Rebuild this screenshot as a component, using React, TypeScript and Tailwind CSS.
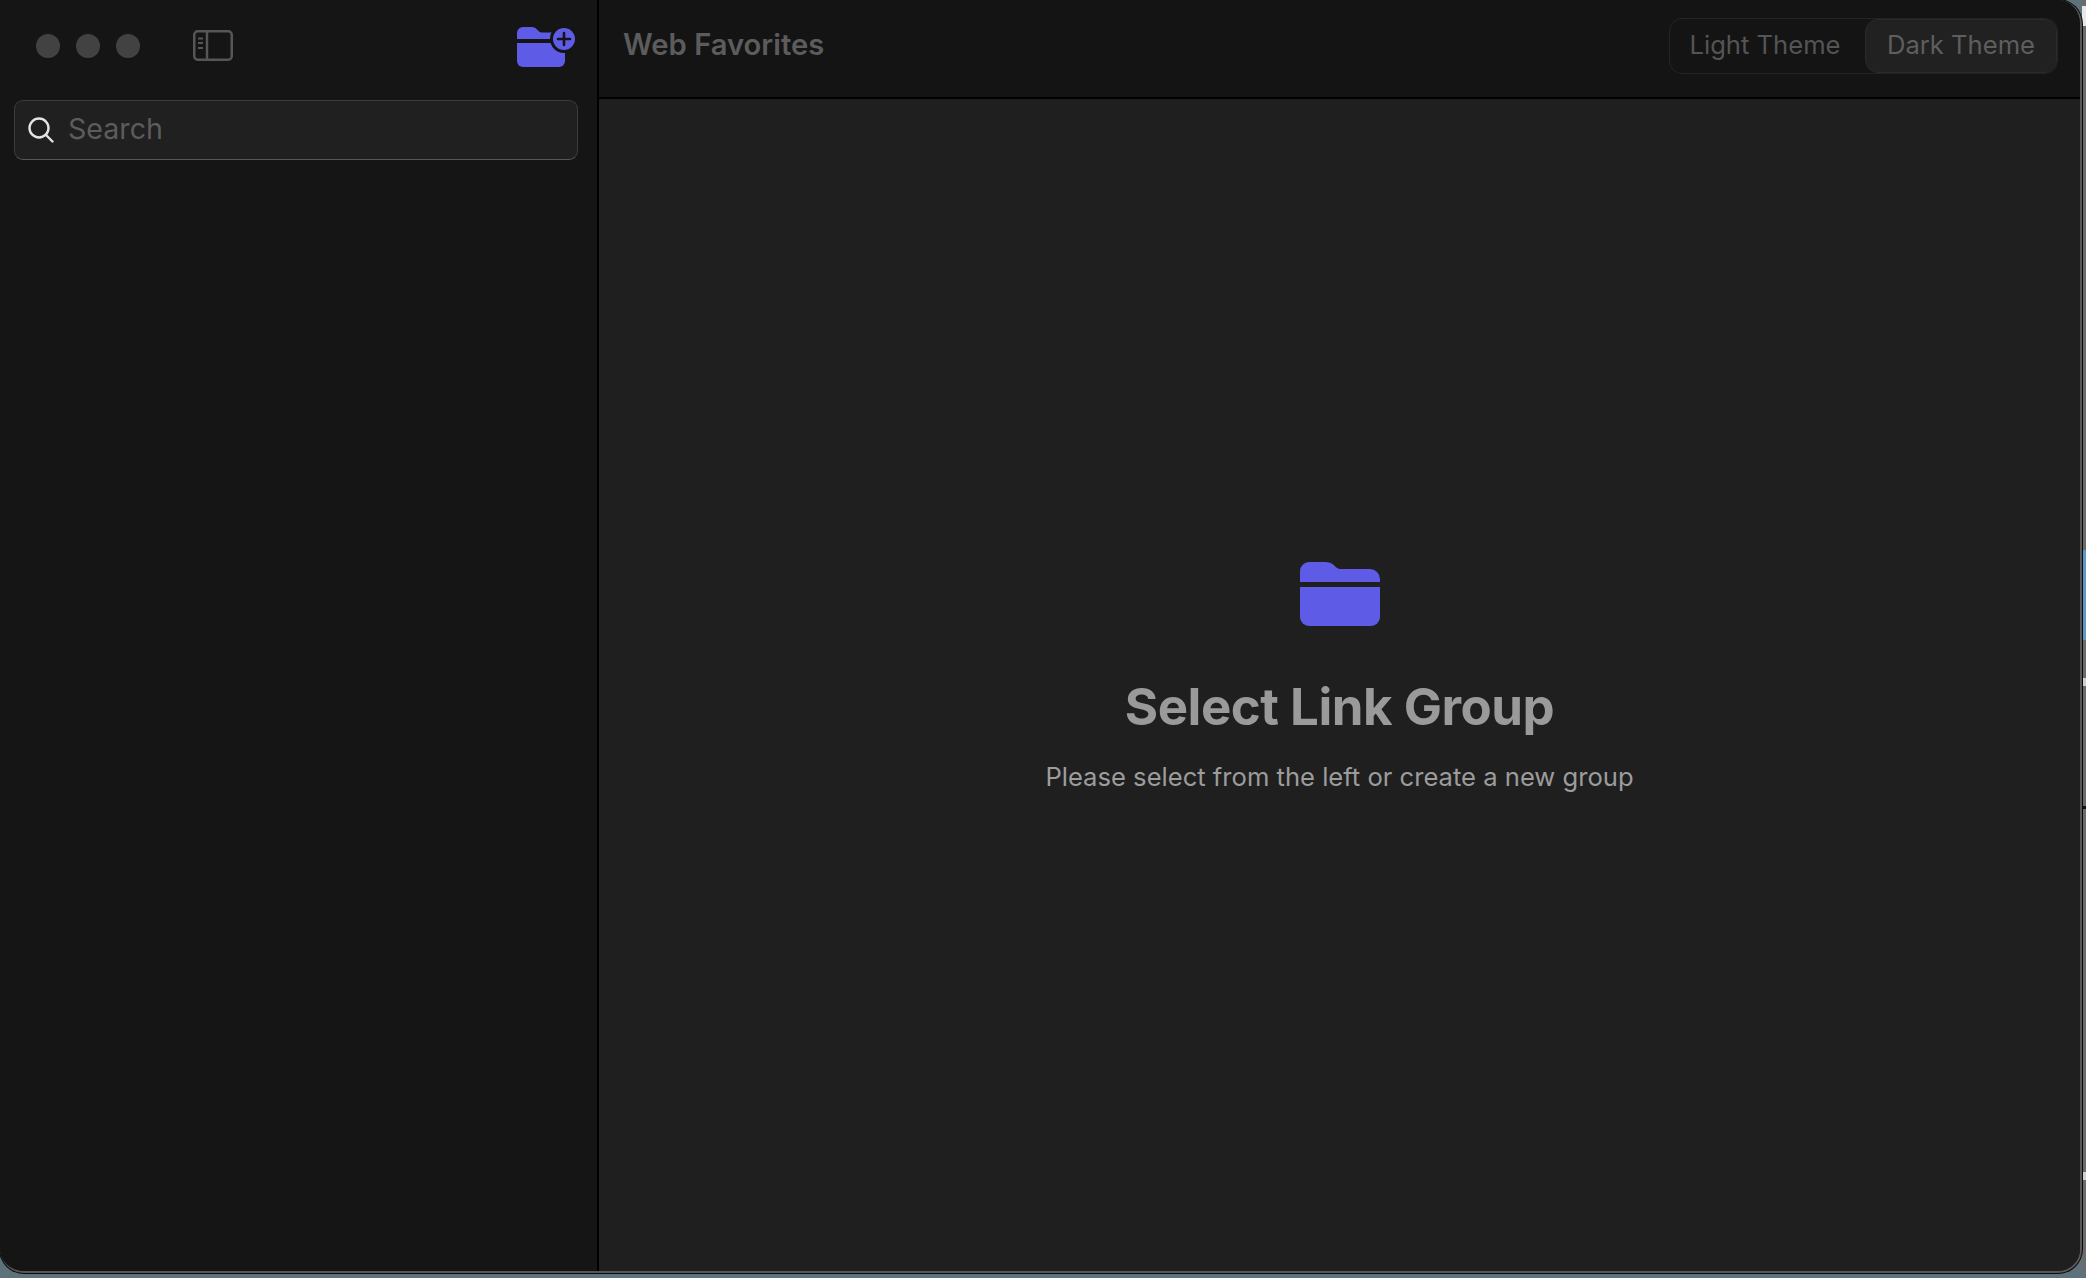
function SidebarIcon() {
  return (
    <svg width="40" height="31" viewBox="0 0 40 31" fill="none" stroke="#565656">
      <rect x="1.25" y="1.25" width="37.5" height="28.5" rx="3.5" strokeWidth="2.5" />
      <path d="M14 1.5v28" strokeWidth="2.5" />
      <path d="M5 8.5h5M5 13h5M5 18h5" strokeWidth="1.8" />
    </svg>
  );
}

function FolderPlusIcon() {
  return (
    <svg width="58" height="40" viewBox="0 0 58 40" fill="none">
      <path d="M0 12V6a6 6 0 0 1 6-6h8.5c2.4 0 3.8.7 5.3 2.2l2 2c1 1 2 1.4 3.5 1.4H42a6 6 0 0 1 6 6V12z" fill="#5e5ce6" />
      <path d="M0 16h48v18a6 6 0 0 1-6 6H6a6 6 0 0 1-6-6z" fill="#5e5ce6" />
      <circle cx="47" cy="12" r="14" fill="#141414" />
      <circle cx="47" cy="12" r="11" fill="#5e5ce6" />
      <path d="M47 6v12M41 12h12" stroke="#141414" strokeWidth="2.6" strokeLinecap="round" />
    </svg>
  );
}

function FolderIcon() {
  return (
    <svg width="80" height="64" viewBox="0 0 80 64" fill="none">
      <path d="M0 20V9a9 9 0 0 1 9-9h16c4 0 6.500 1 9 3.300l1.800 1.700c1.700 1.500 3 2 5.200 2h29a10 10 0 0 1 10 10v3z" fill="#5e5ce6" />
      <path d="M0 25h80v30a9 9 0 0 1-9 9H9a9 9 0 0 1-9-9z" fill="#5e5ce6" />
    </svg>
  );
}

function SearchIcon() {
  return (
    <svg width="26" height="26" viewBox="0 0 26 26" fill="none" stroke="#e4e4e4" strokeWidth="2.4" strokeLinecap="round">
      <circle cx="11" cy="11" r="9.500" />
      <path d="M18 18l6.500 6.500" />
    </svg>
  );
}

export default function App() {
  return (
    <div className="relative h-[1278px] w-[2086px] overflow-hidden bg-[#5d727b] pr-[4px] pb-[5px] font-['Inter',sans-serif]">
      {/* desktop showing past the right edge of the window */}
      <div className="absolute right-0 top-0 h-[1272px] w-[4px] bg-[#6b6b6b]" />
      <div className="absolute right-0 top-[6px] h-[20px] w-[4px] bg-[#e8e8e8]" />
      <div className="absolute right-0 top-[550px] h-[90px] w-[4px] bg-[#5b98c4]" />
      <div className="absolute right-0 top-[678px] h-[8px] w-[4px] bg-[#d0d0d0]" />
      <div className="absolute right-0 top-[806px] h-[3px] w-[4px] bg-[#111111]" />
      <div className="absolute right-0 top-[1172px] h-[8px] w-[4px] bg-[#d0d0d0]" />

      <div className="relative flex h-full w-full overflow-hidden rounded-[24px] rounded-tl-none border-r-2 border-b-2 border-[#585858] bg-[#1f1f1f] shadow-[0_0_0_1px_#0a0a0a]">
        <aside className="w-[599px] shrink-0 border-r-2 border-black bg-[#151515]">
          <div className="flex h-[91px] items-center pl-[36px] pr-[22px]">
            <div className="flex gap-4">
              <div className="h-6 w-6 rounded-full bg-[#424242]" />
              <div className="h-6 w-6 rounded-full bg-[#424242]" />
              <div className="h-6 w-6 rounded-full bg-[#424242]" />
            </div>
            <div className="ml-[53px] flex">
              <SidebarIcon />
            </div>
            <div className="ml-auto mt-[3px] flex">
              <FolderPlusIcon />
            </div>
          </div>
          <div className="ml-[14px] mr-[19px] mt-[9px] flex h-[60px] items-center rounded-[9px] border border-[#3c3c3c] border-b-[#565656] bg-[#202020] pl-[13px]">
            <SearchIcon />
            <span className="ml-[14px] mb-[2px] text-[28.6px] leading-none text-[#5c5c5c]">Search</span>
          </div>
        </aside>

        <main className="flex min-w-0 flex-1 flex-col">
          <header className="flex h-[99px] shrink-0 items-center border-b-2 border-black bg-[#141414] pl-[24px] pr-[22px]">
            <h1 className="mb-[8px] text-[29.2px] font-semibold leading-none text-[#5c5c5c]">Web Favorites</h1>
            <div className="ml-auto mb-[6px] flex h-[56px] w-[389px] rounded-[13px] border border-[#242424]">
              <button className="w-[195px] pr-[5px] pb-[1px] text-[25.6px] leading-none text-[#545454]">Light Theme</button>
              <button className="flex-1 rounded-[13px] border border-[#2a2a2a] bg-[#212121] pb-[1px] text-[25.6px] leading-none text-[#5e5e5e]">Dark Theme</button>
            </div>
          </header>
          <div className="flex flex-1 flex-col items-center justify-center bg-[#1f1f1f] pb-[19px]">
            <FolderIcon />
            <h2 className="mt-[55px] text-[51px] font-bold leading-none tracking-[-0.5px] text-[#9a9a9a]">Select Link Group</h2>
            <p className="mt-[32px] text-[25.6px] leading-none text-[#9c9c9c]">Please select from the left or create a new group</p>
          </div>
        </main>
      </div>
    </div>
  );
}
